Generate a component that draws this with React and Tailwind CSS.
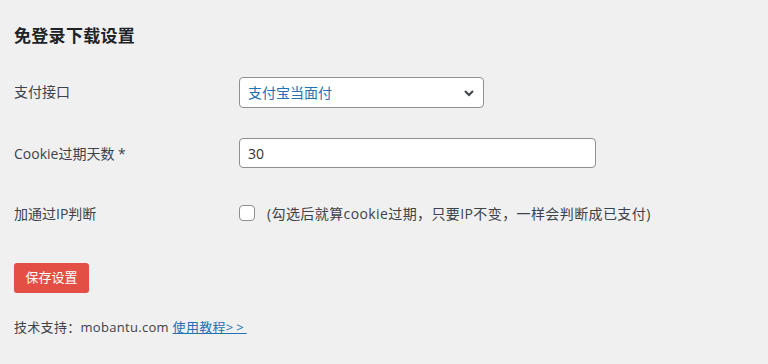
import React, { useState } from "react";

const font = { fontFamily: '"Open Sans", "Noto Sans CJK SC", sans-serif' };

export default function App() {
  const [pay, setPay] = useState("alipay_f2f");
  const [days, setDays] = useState("30");
  const [ipCheck, setIpCheck] = useState(false);

  return (
    <div className="w-[768px] h-[364px] bg-[#f0f0f1] text-[#3c434a] pl-[14px]" style={font}>
      {/* title */}
      <div className="h-[61px] pt-[26px]">
        <h2 className="text-[17px] leading-[20px] font-bold text-[#1d2327] tracking-[0.3px]">免登录下载设置</h2>
      </div>

      {/* 支付接口 */}
      <div className="flex items-center h-[62px]">
        <div className="w-[225px] text-[14px] text-[#3c434a] -mt-[2px]">支付接口</div>
        <div className="relative w-[245px] h-[31px]">
          <select
            className="appearance-none w-full h-full bg-white border border-[#8c8f94] rounded-[4px] pl-[8px] pr-[24px] text-[14px] text-[#2271b1] outline-none"
            value={pay}
            onChange={(e) => setPay(e.target.value)}
          >
            <option value="alipay_f2f">支付宝当面付</option>
            <option value="wechat">微信支付</option>
          </select>
          <svg
            className="absolute right-[9px] top-[10px] pointer-events-none"
            width="12"
            height="12"
            viewBox="0 0 12 12"
            fill="none"
            stroke="#3c434a"
            strokeWidth="2"
          >
            <path d="M2 4l4 4 4-4" />
          </svg>
        </div>
      </div>

      {/* Cookie过期天数 */}
      <div className="flex items-center h-[60px]">
        <div className="w-[225px] text-[14px] text-[#3c434a]">Cookie过期天数 *</div>
        <input
          type="text"
          className="w-[357px] h-[30px] bg-white border border-[#8c8f94] rounded-[4px] px-[8px] text-[14px] text-[#2c3338] outline-none"
          value={days}
          onChange={(e) => setDays(e.target.value)}
        />
      </div>

      {/* IP判断 */}
      <div className="flex items-center h-[60px]">
        <div className="w-[225px] text-[14px] text-[#3c434a]">加通过IP判断</div>
        <label className="flex items-center gap-[12px] text-[14px] text-[#3c434a]">
          <input
            type="checkbox"
            className="appearance-none w-[16px] h-[16px] bg-white border border-[#8c8f94] rounded-[4px] shrink-0"
            checked={ipCheck}
            onChange={(e) => setIpCheck(e.target.checked)}
          />
          <span className="tracking-[0.4px]">(勾选后就算cookie过期，只要IP不变，一样会判断成已支付)</span>
        </label>
      </div>

      <button
        type="button"
        className="mt-[20px] w-[75px] h-[30px] rounded-[3px] bg-[#e34f45] text-white text-[13px]"
      >
        保存设置
      </button>

      <p className="mt-[24px] text-[13px] leading-[20px] text-[#3c434a] tracking-[0.3px]">
        技术支持：mobantu.com{" "}
        <a href="#" className="text-[#2271b1] underline">
          使用教程<span className="tracking-[3px]">&gt;&gt;</span>
        </a>
      </p>
    </div>
  );
}
